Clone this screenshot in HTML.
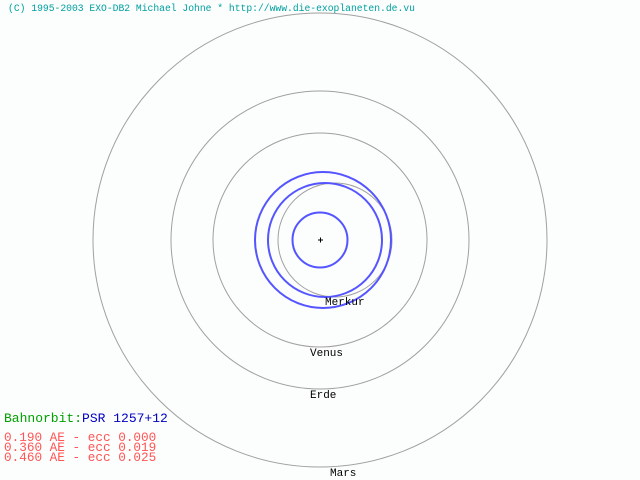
<!DOCTYPE html>
<html><head><style>
html,body{margin:0;padding:0;background:#fcfdfd;}
body{width:640px;height:480px;position:relative;overflow:hidden;font-family:"Liberation Mono",monospace;font-size:11px;}
.t{position:absolute;white-space:pre;line-height:11px;}
</style></head><body>
<svg width="640" height="480" style="position:absolute;left:0;top:0">
<g fill="none" stroke="#a0a0a0" stroke-width="1">
<circle cx="320" cy="240" r="227"/>
<circle cx="320" cy="240" r="149"/>
<circle cx="320" cy="240" r="107"/>
<circle cx="335" cy="240" r="57"/>
</g>
<g fill="none" stroke="#5555ff" stroke-width="2">
<circle cx="320" cy="240" r="27.5"/>
<circle cx="325" cy="240" r="57"/>
<circle cx="323" cy="240" r="68"/>
</g>
<path d="M318 240h5M320.5 237.5v5" stroke="#000" stroke-width="1"/>
</svg>
<div class="t" style="left:8px;top:3px;color:#00a0a0;font-size:9.7px">(C) 1995-2003 EXO-DB2 Michael Johne * http://www.die-exoplaneten.de.vu</div>
<div class="t" style="left:325px;top:298px;color:#000">Merkur</div>
<div class="t" style="left:310px;top:349px;color:#000">Venus</div>
<div class="t" style="left:310px;top:391px;color:#000">Erde</div>
<div class="t" style="left:330px;top:469px;color:#000">Mars</div>
<div class="t" style="left:4px;top:412px;font-size:13px;line-height:13px"><span style="color:#00a000">Bahnorbit:</span><span style="color:#0000c0">PSR 1257+12</span></div>
<div class="t" style="left:4px;top:433px;color:#ff5555;font-size:12.7px;line-height:10px">0.190 AE - ecc 0.000
0.360 AE - ecc 0.019
0.460 AE - ecc 0.025</div>
</body></html>
